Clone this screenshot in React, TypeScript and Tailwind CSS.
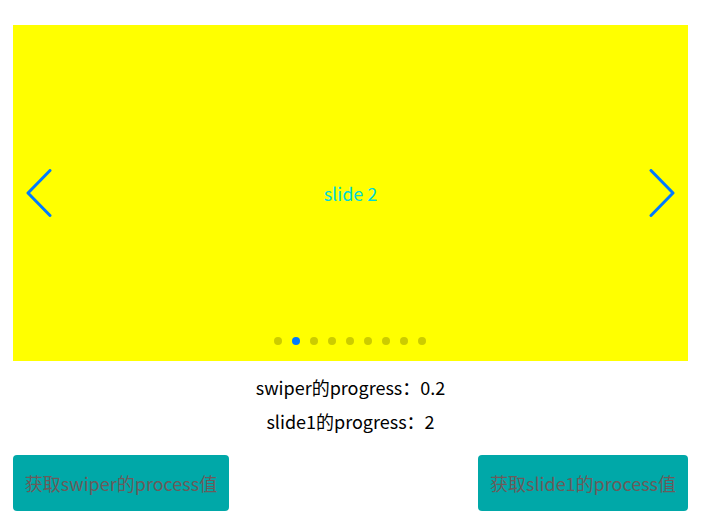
import React from "react";

export default function App() {
  const dots = Array.from({ length: 9 });
  return (
    <div
      className="w-[706px] h-[529px] bg-white"
      style={{ fontFamily: '"Noto Sans CJK SC", "Noto Sans", sans-serif' }}
    >
      <div className="pt-[25px] pl-[13px] w-[688px]">
        <div className="relative w-[675px] h-[336px] bg-[#ffff00] flex items-center justify-center">
          <span className="text-[18px] text-[#00d8d8]">slide 2</span>
          <svg
            className="absolute left-[13px] top-[144px]"
            width="27"
            height="48"
            viewBox="0 0 27 48"
          >
            <polyline
              points="24,1.5 2,24 24,46.5"
              fill="none"
              stroke="#007aff"
              strokeWidth="3"
              strokeLinecap="round"
              strokeLinejoin="round"
            />
          </svg>
          <svg
            className="absolute left-[635px] top-[144px]"
            width="27"
            height="48"
            viewBox="0 0 27 48"
          >
            <polyline
              points="3,1.5 25,24 3,46.5"
              fill="none"
              stroke="#007aff"
              strokeWidth="3"
              strokeLinecap="round"
              strokeLinejoin="round"
            />
          </svg>
          <div className="absolute left-0 right-0 top-[312px] flex justify-center">
            <div className="flex gap-[10px] ml-[-2px]">
              {dots.map((_, i) => (
                <span
                  key={i}
                  className={
                    "block w-[8px] h-[8px] rounded-full " +
                    (i === 1 ? "bg-[#007aff]" : "bg-[#cccc00]")
                  }
                />
              ))}
            </div>
          </div>
        </div>
        <div className="flex flex-col items-center text-[18px] text-black">
          <div className="mt-[9px] leading-[34px]">swiper的progress：0.2</div>
          <div className="leading-[34px]">slide1的progress：2</div>
        </div>
        <div className="flex justify-between mt-[17px]">
          <button className="w-[216px] h-[56px] rounded-[4px] bg-[#00a8a8] text-[#6b5b5b] text-[18px]">
            获取swiper的process值
          </button>
          <button className="w-[210px] h-[56px] rounded-[4px] bg-[#00a8a8] text-[#6b5b5b] text-[18px]">
            获取slide1的process值
          </button>
        </div>
      </div>
    </div>
  );
}
